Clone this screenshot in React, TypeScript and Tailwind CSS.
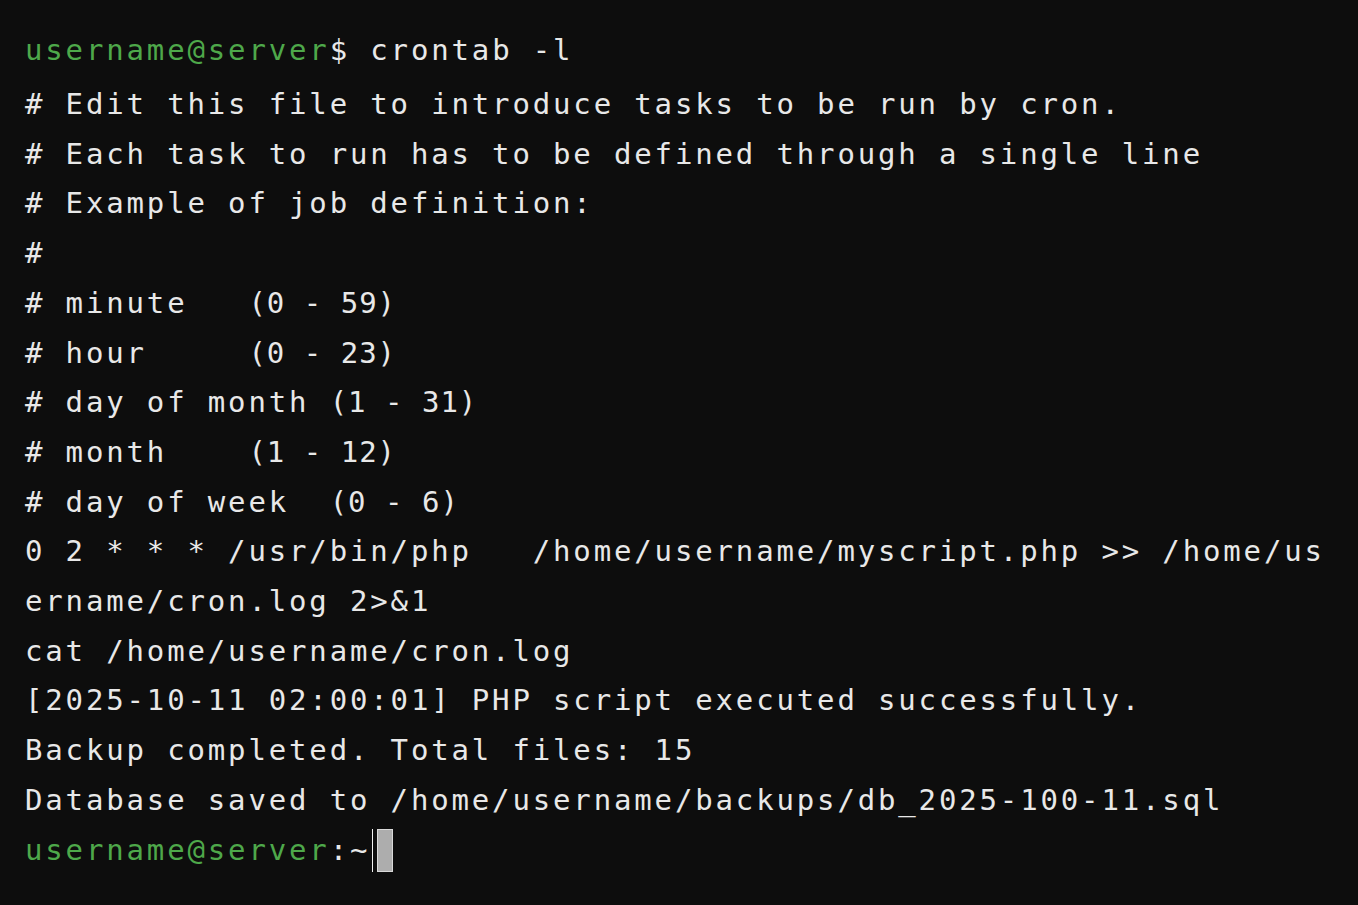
import React from "react";

const G = ({ children }: { children: React.ReactNode }) => (
  <span className="text-[#4ea84a]">{children}</span>
);

// tighter spacing for the range columns, as in the screenshot
const R = ({ children }: { children: React.ReactNode }) => (
  <span className="tracking-[1px]">{children}</span>
);

const lines: React.ReactNode[] = [
  "# Edit this file to introduce tasks to be run by cron.",
  "# Each task to run has to be defined through a single line",
  "# Example of job definition:",
  "#",
  <>
    # minute   <R>(0 - 59)</R>
  </>,
  <>
    # hour     <R>(0 - 23)</R>
  </>,
  <>
    # day of month <R>(1 - 31)</R>
  </>,
  <>
    # month    <R>(1 - 12)</R>
  </>,
  <>
    # day of week  <R>(0 - 6)</R>
  </>,
  "0 2 * * * /usr/bin/php   /home/username/myscript.php >> /home/us",
  "ername/cron.log 2>&1",
  "cat /home/username/cron.log",
  "[2025-10-11 02:00:01] PHP script executed successfully.",
  "Backup completed. Total files: 15",
  "Database saved to /home/username/backups/db_2025-100-11.sql",
];

export default function App() {
  return (
    <div
      className="w-[1358px] h-[905px] overflow-hidden bg-[#0d0d0d] text-[#e8e8e8] pl-[25px] pt-[25px] text-[29px] tracking-[2.85px] whitespace-pre"
      style={{ fontFamily: '"DejaVu Sans Mono", "Liberation Mono", monospace' }}
    >
      <div className="leading-[50px] mb-[5px]">
        <G>username@server</G>$ crontab -l
      </div>
      {lines.map((l, i) => (
        <div key={i} className="leading-[49.7px]">
          {l}
        </div>
      ))}
      <div className="leading-[49.7px] flex items-center">
        <G>username@server</G>
        <span>:~</span>
        <span className="ml-[2px] w-px h-[43px] bg-[#f0f0f0]" />
        <span className="ml-[4px] w-[16px] h-[43px] bg-[#adadad] border border-[#d8d8d8]" />
      </div>
    </div>
  );
}
